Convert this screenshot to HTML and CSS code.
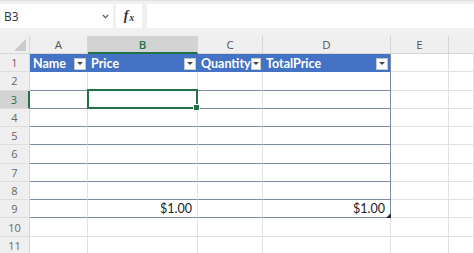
FILE: index.html
```html
<!DOCTYPE html>
<html>
<head>
<meta charset="utf-8">
<link rel="stylesheet" href="styles.css">
</head>
<body>
<div class="app">
  <div class="fbar">
    <div class="namebox"><span class="nb-text">B3</span><svg class="caret" width="7" height="5" viewBox="0 0 7 5"><path d="M0.8 1 L3.5 3.7 L6.2 1" fill="none" stroke="#555" stroke-width="1.1"/></svg></div>
    <div class="fx"><span class="fx-f">f</span><span class="fx-x">x</span></div>
    <div class="finput"></div>
  </div>
  <div class="sheet">
    <div class="corner"><span class="tri"></span></div>
    <div class="ch">A</div><div class="ch chsel">B</div><div class="ch">C</div><div class="ch">D</div><div class="ch">E</div><div class="ch last"></div>

    <div class="rh">1</div>
    <div class="th"><span>Name</span><i class="dd"></i></div>
    <div class="th"><span>Price</span><i class="dd"></i></div>
    <div class="th"><span>Quantity</span><i class="dd"></i></div>
    <div class="th tr"><span>TotalPrice</span><i class="dd"></i></div>
    <div class="c"></div><div class="c"></div>

    <div class="rh">2</div>
    <div class="c tb"></div><div class="c tb"></div><div class="c tb"></div><div class="c tb tr"></div><div class="c"></div><div class="c"></div>

    <div class="rh rhsel">3</div>
    <div class="c tb"></div><div class="c tb sel"></div><div class="c tb"></div><div class="c tb tr"></div><div class="c"></div><div class="c"></div>

    <div class="rh">4</div>
    <div class="c tb"></div><div class="c tb"></div><div class="c tb"></div><div class="c tb tr"></div><div class="c"></div><div class="c"></div>

    <div class="rh">5</div>
    <div class="c tb"></div><div class="c tb"></div><div class="c tb"></div><div class="c tb tr"></div><div class="c"></div><div class="c"></div>

    <div class="rh">6</div>
    <div class="c tb"></div><div class="c tb"></div><div class="c tb"></div><div class="c tb tr"></div><div class="c"></div><div class="c"></div>

    <div class="rh">7</div>
    <div class="c tb"></div><div class="c tb"></div><div class="c tb"></div><div class="c tb tr"></div><div class="c"></div><div class="c"></div>

    <div class="rh">8</div>
    <div class="c tb"></div><div class="c tb"></div><div class="c tb"></div><div class="c tb tr"></div><div class="c"></div><div class="c"></div>

    <div class="rh">9</div>
    <div class="c tb"></div><div class="c tb num">$1.00</div><div class="c tb"></div><div class="c tb tr num corner-h">$1.00</div><div class="c"></div><div class="c"></div>

    <div class="rh">10</div>
    <div class="c"></div><div class="c"></div><div class="c"></div><div class="c"></div><div class="c"></div><div class="c"></div>

    <div class="rh">11</div>
    <div class="c"></div><div class="c"></div><div class="c"></div><div class="c"></div><div class="c"></div><div class="c"></div>
  </div>
</div>
</body>
</html>
```

FILE: styles.css
```css
* { box-sizing: border-box; }
html, body { margin: 0; padding: 0; }
body { width: 474px; height: 253px; overflow: hidden; background: #fff; }

.app { display: flex; flex-direction: column; width: 474px; height: 253px; background: #f3f3f3; }

.fbar {
  display: flex;
  height: 36px;
  padding: 3px 0 8px 0;
  gap: 3px;
  background: #f0f0f0;
  border-top: 1px solid #e2e2e2;
}
.namebox {
  width: 113px;
  background: #fff;
  display: flex;
  align-items: center;
  justify-content: space-between;
  padding: 0 4px 0 4px;
}
.nb-text { font-family: "Open Sans", sans-serif; font-size: 12px; color: #333; }
.caret { margin-right: 0px; margin-top: 1px; }
.fx {
  width: 26px;
  background: #fff;
  display: flex;
  align-items: center;
  justify-content: center;
  font-family: "Liberation Serif", serif;
  font-style: italic;
  color: #333;
}
.fx-f { font-size: 14px; font-weight: bold; }
.fx-x { font-size: 10px; font-weight: bold; margin-top: 3px; margin-left: 1px; }
.finput { flex: 1; background: #fff; margin-left: 2px; }

.sheet {
  flex: 1;
  display: grid;
  grid-template-columns: 30px 58px 110px 65px 128px 58px 1fr;
  grid-template-rows: 18px repeat(11, 18.27px);
  background: #fff;
  overflow: hidden;
}

.corner {
  background: #efefef;
  border-right: 1px solid #d6d6d6;
  border-bottom: 1px solid #d6d6d6;
  position: relative;
}
.tri {
  position: absolute;
  right: 3px;
  bottom: 2px;
  width: 0; height: 0;
  border-left: 12px solid transparent;
  border-bottom: 12px solid #c9c9c9;
}

.ch {
  background: #efefef;
  border-right: 1px solid #d6d6d6;
  border-bottom: 1px solid #d6d6d6;
  display: flex;
  align-items: center;
  justify-content: center;
  font-family: "Open Sans", sans-serif;
  font-size: 11.5px;
  color: #555;
}
.ch.last { border-right: none; }
.chsel {
  background: #d3d3d3;
  color: #217346;
  font-weight: 600;
  border-bottom: 2px solid #217346;
}

.rh {
  background: #efefef;
  border-right: 1px solid #d6d6d6;
  border-bottom: 1px solid #dedede;
  display: flex;
  align-items: center;
  justify-content: center;
  font-family: "Open Sans", sans-serif;
  font-size: 11px;
  color: #666;
}
.rhsel {
  background: #d3d3d3;
  color: #217346;
  border-right: 2px solid #217346;
}

.c {
  border-right: 1px solid #e1e1e1;
  border-bottom: 1px solid #e1e1e1;
  font-family: "Lato", sans-serif;
  font-size: 12.5px;
  color: #222;
}
.c.tb { border-bottom: 1px solid #7f8ca6; }
.tr { border-right: 1px solid #7f8ca6 !important; }

.th {
  background: #4472c4;
  display: flex;
  align-items: center;
  justify-content: space-between;
  padding: 0 2px 0 3px;
  font-family: "Lato", sans-serif;
  font-weight: bold;
  font-size: 12.5px;
  color: #fff;
}
.dd {
  width: 12px;
  height: 12px;
  background: #fff;
  border: 1px solid #c8c8c8;
  display: flex;
  align-items: center;
  justify-content: center;
  margin-top: 1px;
}
.dd::after {
  content: "";
  width: 0; height: 0;
  border-left: 3px solid transparent;
  border-right: 3px solid transparent;
  border-top: 3px solid #444;
}

.num {
  display: flex;
  align-items: flex-end;
  justify-content: flex-end;
  padding: 0 5px 1px 0;
}

.sel { position: relative; }
.sel::after {
  content: "";
  position: absolute;
  left: -1px; top: -2px; right: -1px; bottom: -1px;
  border: 2px solid #217346;
  z-index: 2;
}
.sel::before {
  content: "";
  position: absolute;
  right: -3px; bottom: -3px;
  width: 5px; height: 5px;
  background: #217346;
  border: 1px solid #fff;
  z-index: 3;
}

.corner-h { position: relative; }
.corner-h::after {
  content: "";
  position: absolute;
  right: -1px; bottom: -1px;
  width: 0; height: 0;
  border-left: 5px solid transparent;
  border-bottom: 5px solid #1f2a44;
}
```
